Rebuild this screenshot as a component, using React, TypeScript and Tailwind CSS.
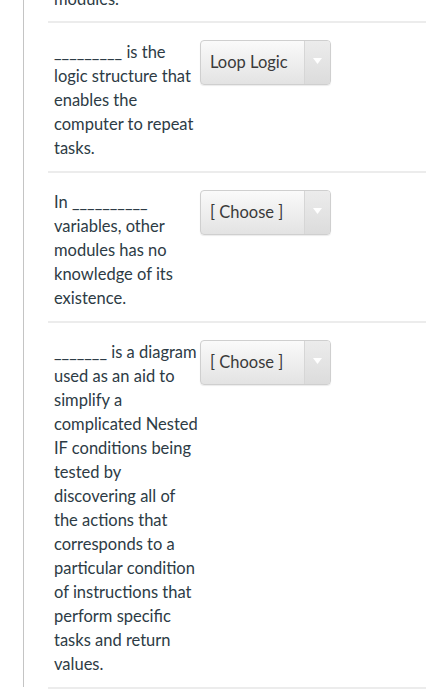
import React from "react";

const font = { fontFamily: "Lato, 'Open Sans', sans-serif" };

function Select({ label }: { label: string }) {
  return (
    <div className="flex h-[45px] w-[131px] shrink-0 overflow-hidden rounded-[4px] border border-[#cfcfcf] bg-gradient-to-b from-[#fafafa] to-[#e3e3e3] shadow-[0_1px_1px_rgba(0,0,0,0.08)]">
      <div className="flex flex-1 items-center pl-[9px] text-[16.5px] text-[#3a3a3a]">{label}</div>
      <div className="flex w-[26px] items-start justify-center border-l border-[#d6d6d6] bg-gradient-to-b from-[#ececec] to-[#dcdcdc] pt-[17px]">
        <svg width="9" height="6" viewBox="0 0 9 6">
          <polygon points="0,0 9,0 4.5,6" fill="#ffffff" />
        </svg>
      </div>
    </div>
  );
}

function Row({ children, label }: { children: React.ReactNode; label: string }) {
  return (
    <div className="flex items-start border-t-2 border-[#ececec] pb-[11px] pl-[6px] pt-[17px]">
      <div className="w-[146px] text-[16.5px] leading-[24px] text-[#2d3b45]">{children}</div>
      <Select label={label} />
    </div>
  );
}

export default function App() {
  return (
    <div className="h-[700px] w-[433px] overflow-hidden bg-white" style={font}>
      <div className="ml-[23px] h-full border-l border-[#c4c4c4] pl-[24px] pr-[7px]">
        <div className="-mt-[13px] pb-[10px] pl-[6px] text-[16.5px] leading-[24px] text-[#2d3b45]">modules.</div>
        <Row label="Loop Logic">
          _________ is the logic structure that enables the computer to repeat tasks.
        </Row>
        <Row label="[ Choose ]">
          In __________ variables, other modules has no knowledge of its existence.
        </Row>
        <Row label="[ Choose ]">
          _______ is a diagram used as an aid to simplify a complicated Nested IF conditions being tested by discovering all of the actions that corresponds to a particular condition of instructions that perform specific tasks and return values.
        </Row>
        <div className="border-t-2 border-[#ececec]" />
      </div>
    </div>
  );
}
